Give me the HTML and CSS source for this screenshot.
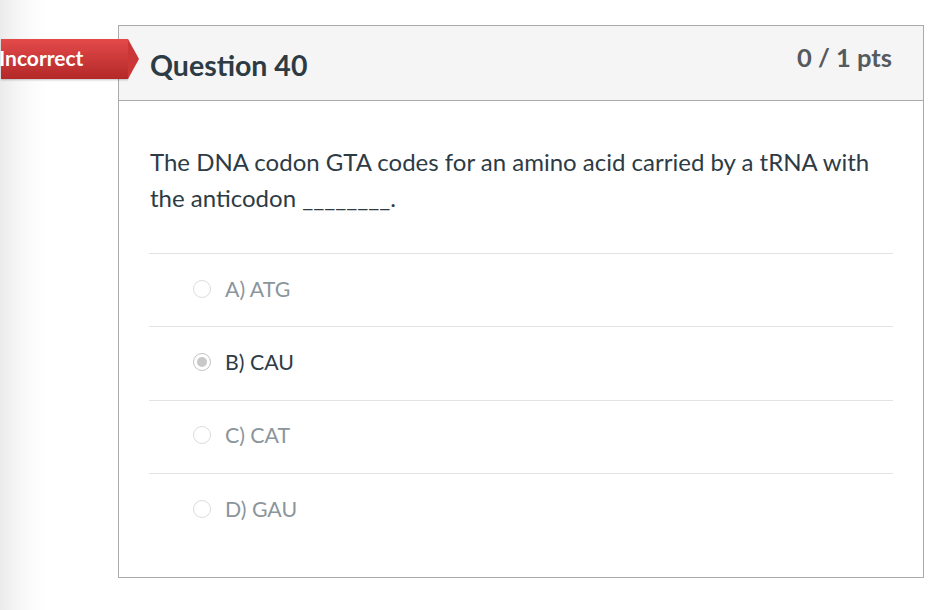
FILE: index.html
```html
<!DOCTYPE html>
<html lang="en">
<head>
<meta charset="utf-8">
<title>Question 40</title>
<link rel="stylesheet" href="styles.css">
</head>
<body>
<div class="page">
  <div class="question">
    <div class="badge"><span class="badge-text">Incorrect</span></div>
    <div class="q-header">
      <h2 class="q-title">Question 40</h2>
      <div class="q-points">0 / 1 pts</div>
    </div>
    <div class="q-body">
      <p class="q-text">The DNA codon GTA codes for an amino acid carried by a tRNA with the anticodon ________.</p>
      <ul class="answers">
        <li class="answer"><span class="radio"></span><span class="label">A) ATG</span></li>
        <li class="answer selected"><span class="radio"></span><span class="label">B) CAU</span></li>
        <li class="answer"><span class="radio"></span><span class="label">C) CAT</span></li>
        <li class="answer"><span class="radio"></span><span class="label">D) GAU</span></li>
      </ul>
    </div>
  </div>
</div>
</body>
</html>
```
FILE: styles.css
```css
html, body {
  margin: 0;
  padding: 0;
}
body {
  width: 952px;
  height: 610px;
  overflow: hidden;
  font-family: Lato, "Open Sans", sans-serif;
  background: linear-gradient(to right, #ebebeb 0px, #f6f6f6 18px, #fcfcfc 34px, #ffffff 46px);
  color: #2d3b45;
}
.page {
  padding: 25px 0 0 118px;
}
.question {
  position: relative;
  width: 804px;
  height: 551px;
  border: 1px solid #aaaaaa;
  background: #ffffff;
}
.badge {
  position: absolute;
  left: -118px;
  top: 13px;
  width: 127px;
  height: 40px;
  background: linear-gradient(to bottom, #e44a4a, #b32828);
  box-shadow: 0 1px 2px rgba(0,0,0,0.25);
  display: flex;
  align-items: center;
}
.badge::after {
  content: "";
  position: absolute;
  right: -11px;
  top: 0;
  width: 0;
  height: 0;
  border-top: 20px solid transparent;
  border-bottom: 20px solid transparent;
  border-left: 11px solid #cb3636;
}
.badge-text {
  color: #ffffff;
  font-weight: 700;
  font-size: 21px;
  margin-left: -2px;
  margin-top: -3px;
}
.q-header {
  height: 74px;
  background: #f5f5f5;
  border-bottom: 1px solid #aaaaaa;
  display: flex;
  justify-content: space-between;
  align-items: flex-start;
  padding: 0 31px 0 31px;
}
.q-title {
  margin: 21px 0 0 0;
  font-size: 28.5px;
  line-height: 36px;
  font-weight: 700;
  color: #2d3b45;
}
.q-points {
  margin-top: 14px;
  font-size: 25.5px;
  line-height: 34px;
  font-weight: 700;
  color: #555a5e;
}
.q-body {
  padding: 0 30px 0 30px;
}
.q-text {
  margin: 0;
  padding: 43px 0 37px 1px;
  font-size: 24px;
  line-height: 36px;
  border-bottom: 1px solid #e3e3e3;
}
.answers {
  list-style: none;
  margin: 0;
  padding: 0;
}
.answer {
  height: 72.3px;
  box-sizing: border-box;
  height: 73.3px;
  display: flex;
  align-items: center;
  padding-left: 44px;
  padding-bottom: 3px;
  border-bottom: 1px solid #e3e3e3;
  color: #8b959c;
  font-size: 21.3px;
}
.answer:last-child {
  border-bottom: none;
}
.answer.selected {
  color: #2d3b45;
}
.radio {
  width: 18px;
  height: 18px;
  border-radius: 50%;
  border: 1px solid #dddddd;
  background: #ffffff;
  box-sizing: border-box;
  margin-right: 14px;
  position: relative;
  flex: none;
}
.answer.selected .radio {
  border: 1px solid #c4c4c4;
}
.answer.selected .radio::after {
  content: "";
  position: absolute;
  left: 3px;
  top: 3px;
  width: 10px;
  height: 10px;
  border-radius: 50%;
  background: #c8c8c8;
}
```
